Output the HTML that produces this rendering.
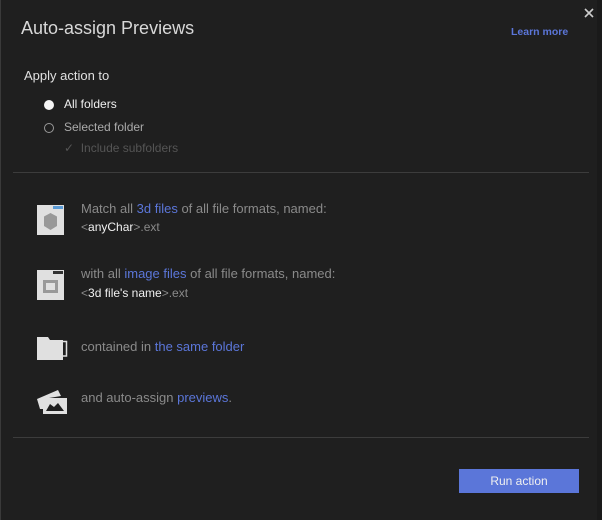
<!DOCTYPE html>
<html><head><style>
body{margin:0;width:602px;height:520px;background:#1f1f1f;font-family:"Liberation Sans",sans-serif;position:relative;overflow:hidden}
.a{position:absolute;white-space:nowrap}
.g{color:#8a8a8a}.b{color:#5b76d9}.w{color:#f0f0f0}
.hr{position:absolute;left:13px;width:576px;height:1px;background:#3c3c3c}
</style></head><body>
<div class="a" style="left:0;top:0;width:1px;height:520px;background:#3a3a3a"></div>
<div class="a" style="left:597px;top:0;width:5px;height:520px;background:#1a1a1a"></div>
<div class="a" style="left:21px;top:18px;font-size:18px;color:#d8d8d8">Auto-assign Previews</div>
<div class="a b" style="left:511px;top:26px;font-size:10.5px;font-weight:bold">Learn more</div>
<svg class="a" style="left:584px;top:8px" width="10" height="10"><path d="M1 1L9 9M9 1L1 9" stroke="#ccc" stroke-width="1.6"/></svg>
<div class="a" style="left:24px;top:68px;font-size:13px;color:#e0e0e0">Apply action to</div>
<div class="a" style="left:44px;top:100px;width:10px;height:10px;border-radius:50%;background:#f5f5f5"></div>
<div class="a w" style="left:64px;top:97px;font-size:12px">All folders</div>
<div class="a" style="left:44px;top:123px;width:8px;height:8px;border-radius:50%;border:1px solid #999"></div>
<div class="a" style="left:64px;top:120px;font-size:12px;color:#aaa">Selected folder</div>
<div class="a" style="left:64px;top:141px;font-size:12px;color:#555">✓&nbsp; Include subfolders</div>
<div class="hr" style="top:172px"></div>
<svg class="a" style="left:37px;top:205px" width="27" height="30"><rect width="27" height="30" fill="#e0e0e0"/><rect x="16" y="1" width="10" height="3" fill="#5b9bd5"/><polygon points="13.5,8 20,11.5 20,21 13.5,25 7,21 7,11.5" fill="#999"/></svg>
<div class="a g" style="left:81px;top:201px;font-size:13px">Match all <span class="b">3d files</span> of all file formats, named:</div>
<div class="a g" style="left:81px;top:220px;font-size:12px">&lt;<span class="w">anyChar</span>&gt;.ext</div>
<svg class="a" style="left:37px;top:270px" width="27" height="30"><rect width="27" height="30" fill="#e0e0e0"/><rect x="16" y="1" width="10" height="3" fill="#333"/><rect x="7.5" y="11.5" width="12" height="10" fill="none" stroke="#999" stroke-width="3"/></svg>
<div class="a g" style="left:81px;top:266px;font-size:13px">with all <span class="b">image files</span> of all file formats, named:</div>
<div class="a g" style="left:81px;top:286px;font-size:12px">&lt;<span class="w">3d file's name</span>&gt;.ext</div>
<svg class="a" style="left:37px;top:336px" width="31" height="25"><path d="M12 5.5H29.5V20H26" fill="none" stroke="#e0e0e0" stroke-width="1.5"/><path d="M0 1h11l2 3h13v20H0z" fill="#e0e0e0"/></svg>
<div class="a g" style="left:81px;top:339px;font-size:13px">contained in <span class="b">the same folder</span></div>
<svg class="a" style="left:37px;top:387px" width="31" height="27"><path d="M0 12 L21 3 L24 9 L6 12 V22 H3 Z" fill="#e0e0e0"/><rect x="6" y="11" width="24" height="16" fill="#e0e0e0"/><path d="M9 24 L13 17 L17 20 L21 16 L27 24Z" fill="#1f1f1f"/></svg>
<div class="a g" style="left:81px;top:390px;font-size:13px">and auto-assign <span class="b">previews</span>.</div>
<div class="hr" style="top:437px"></div>
<div class="a" style="left:459px;top:469px;width:120px;height:24px;background:#5b76d9;color:#f0f0f0;font-size:12px;text-align:center;line-height:24px">Run action</div>
</body></html>
